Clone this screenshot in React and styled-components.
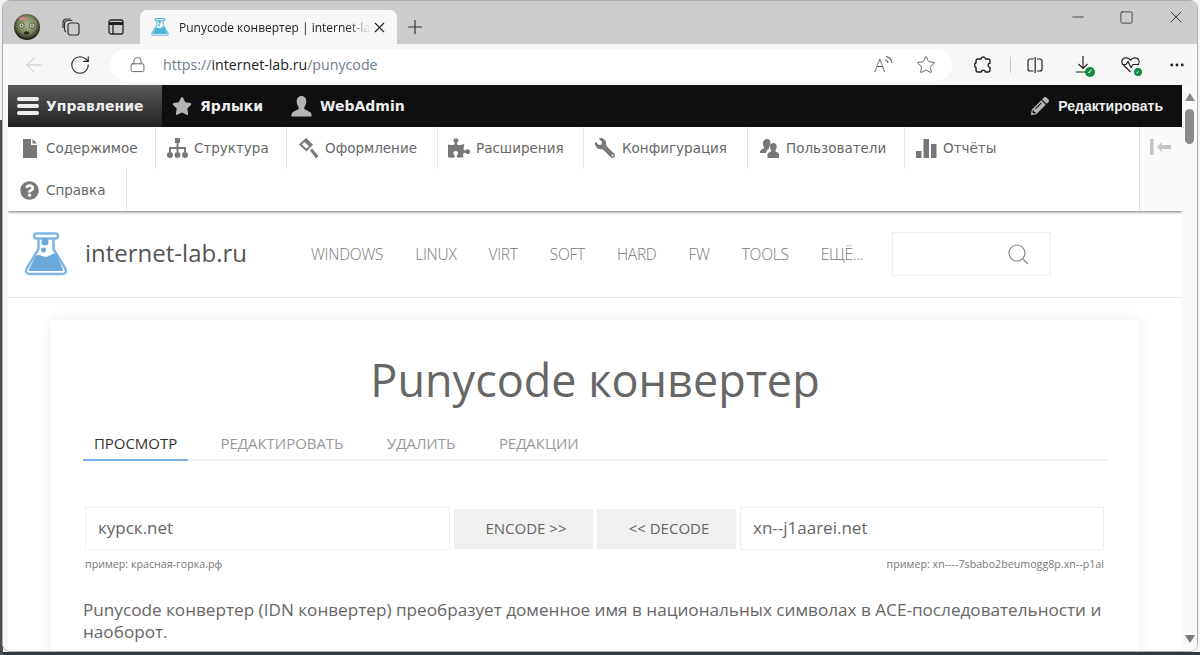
import React from 'react';
import styled, { createGlobalStyle } from 'styled-components';
import { ArrowLeft, RotateCw, Lock, Star, X, Plus, Minus, Square, MoreHorizontal } from 'lucide-react';
import { FaStar, FaWrench, FaPuzzlePiece, FaQuestionCircle, FaPencilAlt } from 'react-icons/fa';

const GlobalStyle = createGlobalStyle`
  html, body { margin: 0; padding: 0; background: #fff; overflow: hidden; }
  * { box-sizing: border-box; }
`;

const adminItems = [
  { label: 'Содержимое', icon: 'file', width: 148 },
  { label: 'Структура', icon: 'tree', width: 131 },
  { label: 'Оформление', icon: 'brush', width: 151 },
  { label: 'Расширения', icon: 'puzzle', width: 146 },
  { label: 'Конфигурация', icon: 'wrench', width: 164 },
  { label: 'Пользователи', icon: 'users', width: 157 },
  { label: 'Отчёты', icon: 'bars', width: 0 },
];

const siteLinks = ['Windows', 'Linux', 'Virt', 'Soft', 'Hard', 'FW', 'Tools', 'Ещё...'];
const pageTabs = ['Просмотр', 'Редактировать', 'Удалить', 'Редакции'];

const FlaskIcon = ({ size, stroke, fill }) => (
  <svg width={size} height={size} viewBox="0 0 44 44">
    <path d="M14.500 6V17L3 36C1 40 2.500 42 6 42H38C41.500 42 43 40 41 36L29.500 17V6" fill="#fff" stroke={stroke} strokeWidth="2.500" strokeLinejoin="round" />
    <rect x="10" y="1.500" width="24" height="5" rx="2.500" fill="#fff" stroke={stroke} strokeWidth="2.500" />
    <path d="M11.500 24c4-3 8 2 12 .5s6-4 9-2.500L38.500 36.500c1 2 .5 2.500-1 2.500H6.500c-1.500 0-2-.5-1-2.500z" fill={fill} />
    <circle cx="21" cy="10" r="3.500" fill={fill} />
    <circle cx="19.500" cy="18" r="2.500" fill={fill} />
  </svg>
);

const ToolIcon = ({ name }) => {
  if (name === 'wrench') return <FaWrench size={20} color="#787878" style={{ transform: 'scaleX(-1)' }} />;
  if (name === 'puzzle') return <FaPuzzlePiece size={22} color="#787878" />;
  if (name === 'help') return <FaQuestionCircle size={19} color="#787878" />;
  const paths = {
    file: 'M4 1h8v6h6v13H4zM13.500 1L18 5.500h-4.500z',
    tree: 'M8 0h5v5h-5zM9.500 5h2v4h-2zM2 9h17v2H2zM2 11h2v3H2zM9.500 11h2v3h-2zM17 11h2v3h-2zM0 17a3 3 0 1 0 6 0a3 3 0 1 0-6 0zM7.500 17a3 3 0 1 0 6 0a3 3 0 1 0-6 0zM15 17a3 3 0 1 0 6 0a3 3 0 1 0-6 0z',
    brush: 'M8 0L15 6.500 8.500 13.500 1 6.500zM6.500 4L3.800 6.500 8.500 10.800 11 8.300zM12 12.500l2-2 6.500 7.500-2.500 2.500z',
    users: 'M8 1c2.200 0 3.500 1.600 3.500 4 0 2-1 3.500-1.500 4v1.500c-1.500 1-2.500 2-3 4.500H1v-1.500c0-1.500 3-2.500 4-3.500V9C4.500 8.500 4 7 4 5c0-2.400 1.800-4 4-4zM14.500 5c2 0 3.200 1.500 3.200 3.500 0 1.500-.7 3-1.300 3.500v1.200c1 1 3.600 1.500 3.600 3V20H8.500v-3.800c0-1.500 2.700-2 3.600-3V12c-.6-.5-1.200-2-1.200-3.500C10.900 6.500 12.500 5 14.500 5z',
    bars: 'M0 13h5.500v7H0zM7.500 1H13v19H7.500zM15 6h5.500v14H15z',
  };
  return (
    <svg width="21" height="21" viewBox="0 0 21 21">
      <path d={paths[name]} fill="#787878" fillRule="evenodd" />
    </svg>
  );
};

const BustIcon = () => (
  <svg width="21" height="21" viewBox="0 0 21 21">
    <path d="M10.500 0c3 0 4.800 2.300 4.800 5.500 0 2.500-1 4.500-2 5.500v2c1.500 1.500 7.200 2.500 7.200 5.500v2H.5v-2c0-3 5.700-4 7.200-5.500v-2c-1-1-2-3-2-5.500C5.700 2.300 7.500 0 10.500 0z" fill="#b4b4b4" />
  </svg>
);

const ZombieAvatar = () => (
  <svg width="26" height="26" viewBox="0 0 26 26">
    <defs>
      <radialGradient id="face" cx="50%" cy="42%" r="55%">
        <stop offset="0" stopColor="#aab58c" />
        <stop offset="0.6" stopColor="#7d8862" />
        <stop offset="1" stopColor="#1f2318" />
      </radialGradient>
    </defs>
    <circle cx="13" cy="13" r="13" fill="url(#face)" />
    <ellipse cx="8.500" cy="4.500" rx="3.500" ry="1.500" fill="#d77f86" />
    <circle cx="7.500" cy="11.500" r="2.600" fill="#e4e6d2" stroke="#3b3f2c" strokeWidth="0.800" />
    <circle cx="18" cy="11.500" r="2.600" fill="#e4e6d2" stroke="#3b3f2c" strokeWidth="0.800" />
    <circle cx="7.500" cy="11.500" r="0.900" fill="#222" />
    <circle cx="18" cy="11.500" r="0.900" fill="#222" />
    <ellipse cx="12.500" cy="19" rx="2.800" ry="1.800" fill="#2c2a20" />
  </svg>
);

const App = () => (
  <>
    <GlobalStyle />
    <Screen>
      <Window>
        <TabStrip>
          <Avatar><ZombieAvatar /></Avatar>
          <StripButton>
            <svg width="18" height="18" viewBox="0 0 18 18" fill="none" stroke="#333" strokeWidth="1.200">
              <rect x="6" y="5" width="11" height="12" rx="2.500" />
              <path d="M4 14c-1-.5-1.500-1.500-1.500-2.500V6c0-2 1.500-3.500 3.500-3.500h4.500M1 10V4.500C1 2.500 2.500 1 4.500 1H9" />
            </svg>
          </StripButton>
          <StripButton>
            <svg width="16" height="16" viewBox="0 0 16 16" fill="none" stroke="#222" strokeWidth="1.300">
              <rect x="1" y="1" width="14" height="14" rx="2" />
              <path d="M1 4.500h14" strokeWidth="3" />
              <path d="M5 4v11" />
            </svg>
          </StripButton>
          <ActiveTab>
            <FlaskIcon size={18} stroke="#52b5d8" fill="#52b5d8" />
            <TabTitle>Punycode конвертер | internet-la</TabTitle>
            <X size={17} color="#222" strokeWidth={1.500} />
          </ActiveTab>
          <NewTab><Plus size={22} color="#333" strokeWidth={1.300} /></NewTab>
          <WindowControls>
            <WindowButton><Minus size={18} color="#222" strokeWidth={1} /></WindowButton>
            <WindowButton><Square size={15} color="#222" strokeWidth={1.200} /></WindowButton>
            <WindowButton><X size={20} color="#222" strokeWidth={1} /></WindowButton>
          </WindowControls>
        </TabStrip>

        <BrowserBar>
          <NavButton><ArrowLeft size={24} color="#c4c4c4" strokeWidth={1} /></NavButton>
          <NavButton><RotateCw size={22} color="#222" strokeWidth={1.200} /></NavButton>
          <AddressBar>
            <Lock size={17} color="#555" strokeWidth={1.200} />
            <Url>https://<b>internet-lab.ru</b>/punycode</Url>
            <ReadAloud>
              A
              <svg width="8" height="11" viewBox="0 0 8 11" fill="none" stroke="#555" strokeWidth="1.100">
                <path d="M.5 5c1.500.5 2.300 1.500 2.500 3M1 1.500c3 .5 5.500 3 6 6.500" />
              </svg>
            </ReadAloud>
            <Star size={20} color="#555" strokeWidth={1.100} />
          </AddressBar>
          <BarIcons>
            <IconSlot $width={44}>
              <svg width="18" height="18" viewBox="0 0 18 18" fill="none" stroke="#222" strokeWidth="1.400">
                <path d="M7 3c.3-1.300 1.200-2 2.300-2 1.200 0 2 .8 2.200 2h2.500c1 0 2 1 2 2v2c-1.300.3-1.900 1.200-1.900 2.300s.6 2 1.900 2.200V14c0 1-1 2-2 2h-2.500c-.2-1-1-1.800-2.200-1.800S7.300 15 7 16H4c-1 0-2-1-2-2v-2.500C1 11.200.5 10.400.5 9.300S1 7.300 2 7V5c0-1 1-2 2-2z" />
              </svg>
            </IconSlot>
            <IconSlot $width={10}><BarDivider /></IconSlot>
            <IconSlot $width={40}>
              <svg width="18" height="18" viewBox="0 0 18 18" fill="none" stroke="#222" strokeWidth="1.200">
                <path d="M7.500 3H4a2 2 0 0 0-2 2v8a2 2 0 0 0 2 2h3.500M11 3h3a2 2 0 0 1 2 2v8a2 2 0 0 1-2 2h-3M9.200 1v16" />
              </svg>
            </IconSlot>
            <IconSlot $width={58}>
              <StatusIcon>
                <svg width="18" height="20" viewBox="0 0 18 20" fill="none" stroke="#222" strokeWidth="1.200">
                  <path d="M8 1v12M3.500 9L8 13.500 12.500 9M1 17h12" />
                </svg>
                <Check $size={10}>✓</Check>
              </StatusIcon>
            </IconSlot>
            <IconSlot $width={34}>
              <StatusIcon>
                <svg width="19" height="18" viewBox="0 0 19 18" fill="none" stroke="#222" strokeWidth="1.200">
                  <path d="M9.500 16L2.500 9C.5 7 .5 4.500 2 3c1.700-1.700 5-1.700 7.500 1C12 1.300 15.300 1.300 17 3c1.500 1.500 1.500 4-.5 6M1 8.500h4l2-3 3 6 2-3h6" />
                </svg>
                <Check $size={8}>✓</Check>
              </StatusIcon>
            </IconSlot>
            <IconSlot $width={40} $gap={10}>
              <MoreHorizontal size={18} color="#222" strokeWidth={1.800} />
            </IconSlot>
          </BarIcons>
        </BrowserBar>

        <Viewport>
          <Page>
            <AdminBar>
              <AdminTabActive>
                <Burger><i /><i /><i /></Burger>
                Управление
              </AdminTabActive>
              <AdminTab><FaStar size={20} color="#b4b4b4" />Ярлыки</AdminTab>
              <AdminTab><BustIcon />WebAdmin</AdminTab>
              <EditLink><FaPencilAlt size={18} color="#b4b4b4" />Редактировать</EditLink>
            </AdminBar>

            <Tray>
              <TrayItems>
                {adminItems.map((item) => (
                  <TrayItem key={item.label} $width={item.width} $plain={!item.width}>
                    <TraySlot><ToolIcon name={item.icon} /></TraySlot>
                    {item.label}
                  </TrayItem>
                ))}
                <TrayItem $width={119}>
                  <TraySlot><ToolIcon name="help" /></TraySlot>
                  Справка
                </TrayItem>
              </TrayItems>
              <TrayToggle>
                <svg width="22" height="16" viewBox="0 0 22 16">
                  <path d="M0 0h3.500v16H0zM7 8l5-5v3h9v4h-9v3z" fill="#c4c4c4" />
                </svg>
              </TrayToggle>
            </Tray>

            <SiteHeader>
              <Brand>
                <FlaskIcon size={44} stroke="#7db5e3" fill="#6aa9dc" />
                <BrandName>internet-lab.ru</BrandName>
              </Brand>
              <SiteNav>
                {siteLinks.map((link) => <SiteLink key={link}>{link}</SiteLink>)}
              </SiteNav>
              <SearchBox>
                <svg width="22" height="22" viewBox="0 0 22 22" fill="none" stroke="#888" strokeWidth="1.200">
                  <circle cx="10" cy="10" r="8" />
                  <path d="M16 16l5 5" />
                </svg>
              </SearchBox>
            </SiteHeader>

            <Card>
              <Title>Punycode конвертер</Title>
              <PageTabs>
                {pageTabs.map((tab, i) => <PageTab key={tab} $active={i === 0}>{tab}</PageTab>)}
              </PageTabs>
              <Converter>
                <Field $width={365}>курск.net</Field>
                <ConvertButton>ENCODE &gt;&gt;</ConvertButton>
                <ConvertButton>&lt;&lt; DECODE</ConvertButton>
                <Field $width={364}>xn--j1aarei.net</Field>
              </Converter>
              <Hints>
                <span>пример: красная-горка.рф</span>
                <span>пример: xn----7sbabo2beumogg8p.xn--p1ai</span>
              </Hints>
              <Lead>
                Punycode конвертер (IDN конвертер) преобразует доменное имя в национальных символах в ACE-последовательности и наоборот.
              </Lead>
            </Card>
          </Page>
          <Scrollbar>
            <ScrollArrow />
            <ScrollThumb />
            <ScrollArrow $down />
          </Scrollbar>
        </Viewport>
      </Window>
    </Screen>
  </>
);

const Screen = styled.div`
  width: 1200px;
  height: 655px;
  overflow: hidden;
  padding-left: 2px;
  background:
    linear-gradient(to bottom, #f2f2f2 120px, #4a4f55 120px) left top / 3px 100% no-repeat,
    linear-gradient(to bottom, #f4f4f4 652px, #2d3a40 652px);
  font-family: 'Open Sans', 'Noto Sans', sans-serif;
`;
const Window = styled.div`
  width: 1196px;
  height: 652px;
  display: flex;
  flex-direction: column;
  overflow: hidden;
  border: 1px solid #aeaeae;
  border-radius: 8px;
  background: #f7f7f7;
`;

const TabStrip = styled.div`
  height: 43px;
  flex: none;
  display: flex;
  align-items: flex-end;
  padding-left: 11px;
  background: #cccccc;
`;
const Avatar = styled.div`
  width: 26px;
  height: 26px;
  margin: 0 8px 4px 0;
  display: flex;
`;
const StripButton = styled.div`
  width: 45px;
  height: 34px;
  display: flex;
  align-items: center;
  justify-content: center;
`;
const ActiveTab = styled.div`
  width: 257px;
  height: 34px;
  margin-left: 2px;
  padding: 0 9px 0 11px;
  display: flex;
  align-items: center;
  border-radius: 7px 7px 0 0;
  background: #f7f7f7;
`;
const TabTitle = styled.span`
  flex: 1;
  min-width: 0;
  margin-left: 10px;
  white-space: nowrap;
  font-size: 12px;
  color: #222;
  mask-image: linear-gradient(to right, #000 88%, transparent 100%);
`;
const NewTab = styled.div`
  width: 36px;
  height: 34px;
  display: flex;
  align-items: center;
  justify-content: center;
`;
const WindowControls = styled.div`
  margin-left: auto;
  margin-right: -3px;
  align-self: flex-start;
  display: flex;
`;
const WindowButton = styled.div`
  width: 49px;
  height: 32px;
  display: flex;
  align-items: center;
  justify-content: center;
`;

const BrowserBar = styled.div`
  height: 41px;
  flex: none;
  display: flex;
  align-items: center;
  padding-left: 8px;
  background: #f7f7f7;
`;
const NavButton = styled.div`
  width: 46px;
  height: 32px;
  display: flex;
  align-items: center;
  justify-content: center;
`;
const AddressBar = styled.div`
  width: 842px;
  height: 32px;
  margin-left: 7px;
  padding: 0 16px 0 19px;
  flex: none;
  display: flex;
  align-items: center;
  border-radius: 16px;
  background: #fff;
`;
const Url = styled.span`
  flex: 1;
  margin-left: 17px;
  font-size: 14.200px;
  color: #6e7b8a;
  b { font-weight: 400; color: #222; }
`;
const ReadAloud = styled.span`
  margin-right: 23px;
  display: flex;
  align-items: flex-start;
  font-size: 18px;
  line-height: 20px;
  font-weight: 300;
  color: #555;
`;
const BarIcons = styled.div`
  flex: none;
  display: flex;
  align-items: center;
  padding-left: 9px;
`;
const IconSlot = styled.div`
  width: ${(p) => p.$width}px;
  margin-left: ${(p) => p.$gap || 0}px;
  display: flex;
  align-items: center;
  justify-content: center;
`;
const BarDivider = styled.span`
  width: 1px;
  height: 16px;
  background: #c8c8c8;
`;
const StatusIcon = styled.div`
  position: relative;
  display: flex;
`;
const Check = styled.span`
  position: absolute;
  right: -2px;
  bottom: -2px;
  width: ${(p) => p.$size}px;
  height: ${(p) => p.$size}px;
  border-radius: 50%;
  display: flex;
  align-items: center;
  justify-content: center;
  font-family: 'DejaVu Sans', sans-serif;
  font-size: ${(p) => p.$size - 3}px;
  font-weight: 700;
  color: #fff;
  background: #128a3c;
`;

const Viewport = styled.div`
  flex: 1;
  min-height: 0;
  display: flex;
  padding-left: 5px;
  background: #f7f7f7;
`;
const Page = styled.div`
  width: 1174px;
  overflow: hidden;
  background: #fff;
`;

const AdminBar = styled.div`
  height: 42px;
  display: flex;
  background: #0f0f0f;
  font-family: 'DejaVu Sans', sans-serif;
  font-size: 14px;
  font-weight: 700;
  color: #eee;
`;
const AdminTabActive = styled.div`
  width: 154px;
  display: flex;
  align-items: center;
  gap: 7px;
  padding-left: 9px;
  background: linear-gradient(to bottom, #5a5a5a, #222);
`;
const Burger = styled.span`
  display: flex;
  flex-direction: column;
  gap: 3px;
  i { display: block; width: 22px; height: 4px; border-radius: 2px; background: #eee; }
`;
const AdminTab = styled.div`
  display: flex;
  align-items: center;
  gap: 8px;
  padding: 0 28px 0 10px;
  & + & { padding-left: 0; }
`;
const EditLink = styled.div`
  margin-left: auto;
  padding-right: 19px;
  display: flex;
  align-items: center;
  gap: 9px;
  font-family: 'Liberation Sans', sans-serif;
  font-size: 14px;
`;

const Tray = styled.div`
  position: relative;
  z-index: 1;
  height: 84px;
  display: flex;
  background: #fff;
  box-shadow: 0 1px 3px rgba(0, 0, 0, 0.55);
`;
const TrayItems = styled.div`
  flex: 1;
  display: flex;
  flex-wrap: wrap;
  align-content: flex-start;
`;
const TrayItem = styled.div`
  width: ${(p) => (p.$plain ? 'auto' : `${p.$width}px`)};
  height: 42px;
  padding-left: 10px;
  display: flex;
  align-items: center;
  gap: 6px;
  font-family: 'DejaVu Sans', sans-serif;
  font-size: 13.500px;
  color: #666;
  border-right: ${(p) => (p.$plain ? 'none' : '1px solid #e5e5e5')};
  ${(p) => p.$plain && 'margin-right: 100px;'}
`;
const TraySlot = styled.span`
  width: 22px;
  display: flex;
  justify-content: center;
`;
const TrayToggle = styled.div`
  width: 43px;
  padding-top: 12px;
  display: flex;
  justify-content: center;
  align-items: flex-start;
  border-left: 1px solid #ddd;
  background: #fafafa;
`;

const SiteHeader = styled.div`
  height: 87px;
  padding: 0 0 0 16px;
  display: flex;
  align-items: center;
  border-bottom: 1px solid #eaeaea;
`;
const Brand = styled.div`
  width: 287px;
  display: flex;
  align-items: center;
  gap: 17px;
`;
const BrandName = styled.span`
  font-size: 24px;
  color: #555;
  margin-top: -3px;
`;
const SiteNav = styled.nav`
  width: 581px;
  display: flex;
  gap: 32px;
`;
const SiteLink = styled.span`
  font-size: 15.500px;
  font-weight: 300;
  color: #777;
  text-transform: uppercase;
  letter-spacing: -0.25px;
`;
const SearchBox = styled.div`
  width: 159px;
  height: 44px;
  padding-right: 21px;
  display: flex;
  align-items: center;
  justify-content: flex-end;
  border: 1px solid #eee;
`;

const Card = styled.div`
  width: 1088px;
  height: 400px;
  margin: 22px 0 0 43px;
  padding: 29px 32px 0;
  background: #fff;
  box-shadow: 0 0 12px rgba(0, 0, 0, 0.08);
`;
const Title = styled.h1`
  margin: 0;
  text-align: center;
  font-size: 45px;
  line-height: 62px;
  font-weight: 400;
  color: #666;
`;
const PageTabs = styled.div`
  margin-top: 19px;
  display: flex;
  height: 31px;
  border-bottom: 2px solid #f0f0f0;
  gap: 21.500px;
  width: 1025px;
`;
const PageTab = styled.div`
  height: 31px;
  padding: 0 11px;
  text-transform: uppercase;
  font-size: 15px;
  line-height: 27px;
  letter-spacing: -0.05px;
  color: ${(p) => (p.$active ? '#333' : '#999')};
  border-bottom: 2px solid ${(p) => (p.$active ? '#78b4e8' : 'transparent')};
`;
const Converter = styled.div`
  margin: 46px 0 0 2px;
  display: flex;
  align-items: center;
  gap: 4px;
`;
const Field = styled.div`
  width: ${(p) => p.$width}px;
  height: 43px;
  padding: 0 0 2px 12px;
  display: flex;
  align-items: center;
  border: 1px solid #eee;
  font-size: 17px;
  color: #666;
`;
const ConvertButton = styled.div`
  width: 139px;
  height: 40px;
  padding: 0 0 2px 5px;
  display: flex;
  align-items: center;
  justify-content: center;
  font-size: 15px;
  color: #666;
  background: #f0f0f0;
`;
const Hints = styled.div`
  width: 1019px;
  margin: 7px 0 0 2px;
  display: flex;
  justify-content: space-between;
  font-size: 10.700px;
  line-height: 14px;
  color: #777;
`;
const Lead = styled.p`
  width: 1025px;
  margin: 28px 0 0;
  font-size: 17.150px;
  line-height: 22px;
  color: #666;
`;

const Scrollbar = styled.div`
  flex: 1;
  display: flex;
  flex-direction: column;
  align-items: center;
  padding: 8px 0 8px;
  background: #fafafa;
`;
const ScrollArrow = styled.span`
  width: 0;
  height: 0;
  border-left: 5px solid transparent;
  border-right: 5px solid transparent;
  ${(p) => (p.$down ? 'border-top: 8px solid #777; margin-top: auto;' : 'border-bottom: 8px solid #888;')}
`;
const ScrollThumb = styled.span`
  width: 9px;
  height: 35px;
  margin-top: 8px;
  border-radius: 5px;
  background: #8c8c8c;
`;

export default App;
